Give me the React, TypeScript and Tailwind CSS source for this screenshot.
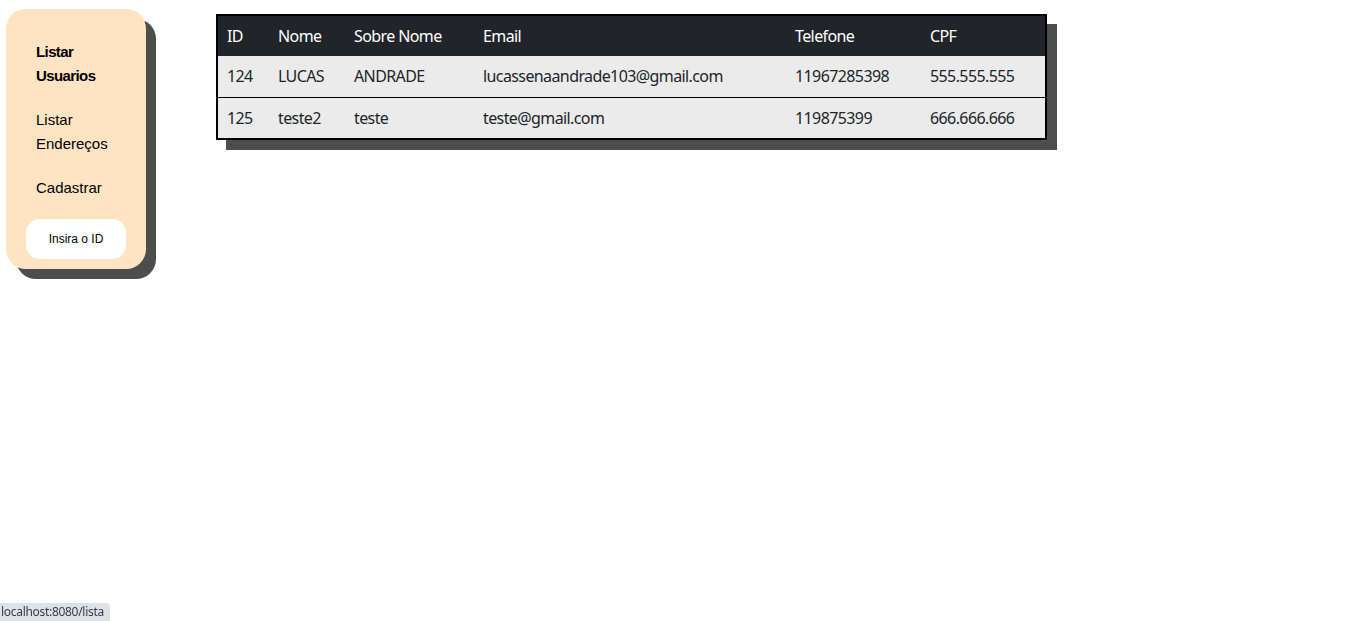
import React from "react";

const rows = [
  { id: "124", nome: "LUCAS", sobre: "ANDRADE", email: "lucassenaandrade103@gmail.com", tel: "11967285398", cpf: "555.555.555" },
  { id: "125", nome: "teste2", sobre: "teste", email: "teste@gmail.com", tel: "119875399", cpf: "666.666.666" },
];

const widths = ["w-[51px]", "w-[76px]", "w-[129px]", "w-[312px]", "w-[135px]", "w-[126px]"];
const pads = ["pl-[9px]", "pl-[10px]", "pl-[10px]", "pl-[10px]", "pl-[10px]", "pl-[10px]"];

export default function App() {
  return (
    <div className="min-h-[621px] w-full bg-white relative">
      <div className="flex items-start">
        <aside
          className="ml-[6px] mt-[9px] w-[140px] h-[260px] rounded-[20px] bg-[#ffe4c4] shadow-[10px_10px_0_#4d4d4d] pt-[31px] pl-[30px] text-black"
          style={{ fontFamily: '"Liberation Sans", Arial, sans-serif' }}
        >
          <div className="text-[15px] leading-[24px] font-bold tracking-[-0.6px]">Listar<br />Usuarios</div>
          <div className="text-[15px] leading-[24px] mt-[20px]">Listar<br />Endereços</div>
          <div className="text-[15px] leading-[24px] mt-[20px]">Cadastrar</div>
          <div className="-ml-[10px] mt-[19px] w-[100px] h-[40px] rounded-[14px] bg-white flex items-center justify-center text-[12px] text-black">
            Insira o ID
          </div>
        </aside>
        <div className="ml-[70px] mt-[14px]">
          <table
            className="border-collapse border-2 border-black shadow-[10px_10px_0_#4d4d4d] text-[16px]"
            style={{ fontFamily: '"Noto Sans", "Open Sans", sans-serif' }}
          >
            <thead>
              <tr className="bg-[#212529] text-white h-[41px]">
                {["ID", "Nome", "Sobre Nome", "Email", "Telefone", "CPF"].map((h, i) => (
                  <th key={h} className={`${widths[i]} ${pads[i]} text-left font-normal pr-0 py-0 align-middle tracking-[-0.6px]`}>{h}</th>
                ))}
              </tr>
            </thead>
            <tbody>
              {rows.map((r, idx) => (
                <tr key={r.id} className={`bg-[#ebebeb] text-[#212529] ${idx > 0 ? "h-[42px] border-t border-black" : "h-[41px]"}`}>
                  {[r.id, r.nome, r.sobre, r.email, r.tel, r.cpf].map((c, i) => (
                    <td key={i} className={`${widths[i]} ${pads[i]} pr-0 py-0 align-middle whitespace-nowrap tracking-[-0.6px]`}>{c}</td>
                  ))}
                </tr>
              ))}
            </tbody>
          </table>
        </div>
      </div>
      <div
        className="fixed left-0 bottom-0 h-[18px] pl-[1px] pr-[6px] bg-[#dee1e6] rounded-tr-[4px] text-[12px] leading-[18px] text-[#3c4043] tracking-[-0.3px]"
        style={{ fontFamily: '"Noto Sans", "Open Sans", sans-serif' }}
      >
        localhost:8080/lista
      </div>
    </div>
  );
}
